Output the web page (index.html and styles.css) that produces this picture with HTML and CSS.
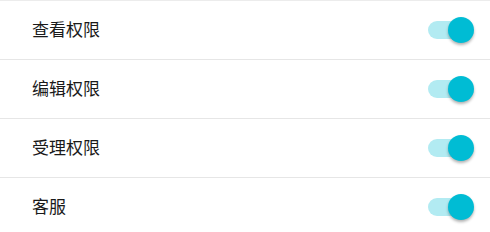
FILE: index.html
```html
<!DOCTYPE html>
<html lang="zh">
<head>
<meta charset="utf-8">
<link rel="stylesheet" href="styles.css">
</head>
<body>
<div class="list">
  <div class="row"><span class="label">查看权限</span><span class="switch"><span class="track"></span><span class="thumb"></span></span></div>
  <div class="row"><span class="label">编辑权限</span><span class="switch"><span class="track"></span><span class="thumb"></span></span></div>
  <div class="row"><span class="label">受理权限</span><span class="switch"><span class="track"></span><span class="thumb"></span></span></div>
  <div class="row"><span class="label">客服</span><span class="switch"><span class="track"></span><span class="thumb"></span></span></div>
</div>
</body>
</html>
```
FILE: styles.css
```css
html, body {
  margin: 0;
  padding: 0;
  background: #fff;
}
.list {
  border-top: 1px solid #ececec;
  font-family: "Noto Sans CJK SC", "Noto Sans", sans-serif;
}
.row {
  height: 58px;
  display: flex;
  align-items: center;
  justify-content: space-between;
  padding: 0 16px 0 32px;
  border-bottom: 1px solid #e6e6e6;
}
.label {
  display: block;
  font-size: 17px;
  line-height: 17px;
  color: #1a1a1a;
  margin-top: -3px;
}
.switch {
  position: relative;
  width: 46px;
  height: 26px;
  display: block;
}
.track {
  position: absolute;
  left: 0;
  top: 4px;
  width: 40px;
  height: 18px;
  border-radius: 9px;
  background: #b2ebf2;
}
.thumb {
  position: absolute;
  right: 0;
  top: 0;
  width: 26px;
  height: 26px;
  border-radius: 50%;
  background: #00bcd4;
  box-shadow: 0 2px 3px rgba(0,0,0,0.3);
}
```
